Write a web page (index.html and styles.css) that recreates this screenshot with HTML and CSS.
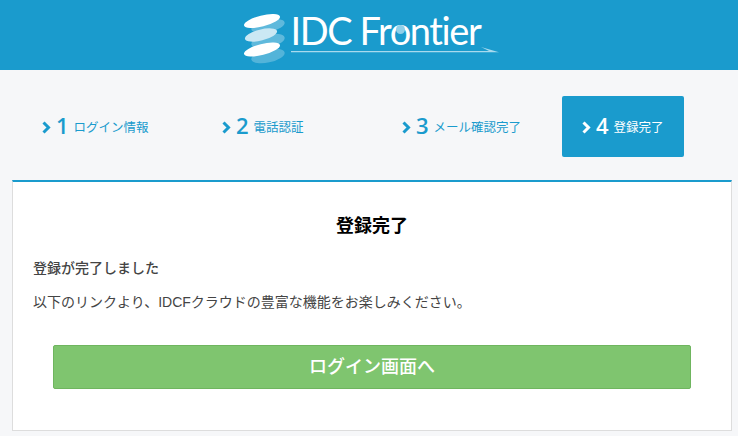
FILE: index.html
```html
<!DOCTYPE html>
<html lang="ja">
<head>
<meta charset="utf-8">
<title>登録完了</title>
<link rel="stylesheet" href="styles.css">
</head>
<body>
<header class="site-header">
  <div class="logo">
    <svg class="logo-mark" width="42" height="54" viewBox="0 0 42 54">
      <ellipse cx="24" cy="14" rx="17" ry="6" fill="#fff" fill-opacity=".3" transform="rotate(-12 24 14)"/>
      <ellipse cx="24" cy="29" rx="17" ry="6.5" fill="#fff" fill-opacity=".3" transform="rotate(-12 24 29)"/>
      <ellipse cx="24" cy="44" rx="17" ry="6.5" fill="#fff" fill-opacity=".25" transform="rotate(-12 24 44)"/>
      <ellipse cx="18" cy="9" rx="18.5" ry="5.5" fill="#fff" transform="rotate(-14 18 9)"/>
      <ellipse cx="17" cy="23" rx="16.5" ry="5.5" fill="#cbe8f4" transform="rotate(-14 17 23)"/>
      <ellipse cx="18" cy="37.5" rx="18.5" ry="5.5" fill="#fff" transform="rotate(-14 18 37.5)"/>
    </svg>
    <div class="logo-word">
      <span class="logo-text">IDC Fr<span class="logo-o">o</span>ntier</span>
      <svg class="logo-line" width="208" height="8" viewBox="0 0 208 8">
        <path d="M0 5.2H208L190 0L198 4H0Z" fill="#a8daee"/>
      </svg>
    </div>
  </div>
</header>
<main class="page">
  <ol class="steps">
    <li class="step"><span class="step-link"><svg class="chev" width="9" height="13" viewBox="0 0 9 13"><path d="M1.5 1.5L6.5 6.5L1.5 11.5" fill="none" stroke="currentColor" stroke-width="3"/></svg><b class="num">1</b><span class="label">ログイン情報</span></span></li>
    <li class="step"><span class="step-link"><svg class="chev" width="9" height="13" viewBox="0 0 9 13"><path d="M1.5 1.5L6.5 6.5L1.5 11.5" fill="none" stroke="currentColor" stroke-width="3"/></svg><b class="num">2</b><span class="label">電話認証</span></span></li>
    <li class="step"><span class="step-link"><svg class="chev" width="9" height="13" viewBox="0 0 9 13"><path d="M1.5 1.5L6.5 6.5L1.5 11.5" fill="none" stroke="currentColor" stroke-width="3"/></svg><b class="num">3</b><span class="label">メール確認完了</span></span></li>
    <li class="step"><span class="step-link active"><svg class="chev" width="9" height="13" viewBox="0 0 9 13"><path d="M1.5 1.5L6.5 6.5L1.5 11.5" fill="none" stroke="currentColor" stroke-width="3"/></svg><b class="num">4</b><span class="label">登録完了</span></span></li>
  </ol>
  <section class="card">
    <h1 class="title">登録完了</h1>
    <p class="lead">登録が完了しました</p>
    <p class="text">以下のリンクより、IDCFクラウドの豊富な機能をお楽しみください。</p>
    <a class="btn" href="#">ログイン画面へ</a>
  </section>
</main>
</body>
</html>
```
FILE: styles.css
```css
* { box-sizing: border-box; }
html, body { margin: 0; padding: 0; }
body {
  background: #f6f7f9;
  color: #333;
  font-family: "Liberation Sans", "Noto Sans CJK JP", sans-serif;
  font-size: 14px;
}
.site-header {
  height: 70px;
  background: #1a9bcd;
  display: flex;
  justify-content: center;
}
.logo {
  display: flex;
  align-items: flex-start;
  gap: 5px;
  padding-top: 12px;
  margin-left: 4px;
}
.logo-mark { display: block; }
.logo-word {
  display: flex;
  flex-direction: column;
  margin-top: 1px;
}
.logo-text {
  color: #fff;
  font-family: "Lato", sans-serif;
  font-weight: 400;
  font-size: 38px;
  line-height: 34px;
  letter-spacing: -1.4px;
  white-space: nowrap;
}
.logo-o { position: relative; }
.logo-o::after {
  content: "";
  position: absolute;
  left: 6px;
  top: 18px;
  width: 9px;
  height: 9px;
  border-radius: 50%;
  background: #8fd0ea;
}
.logo-line { display: block; margin-top: 0; }
.page { padding: 26px 6px 0 12px; }
.steps {
  list-style: none;
  margin: 0;
  padding: 0;
  display: grid;
  grid-template-columns: repeat(4, 180px);
  height: 84px;
}
.step { padding-left: 10px; }
.step-link {
  display: inline-flex;
  align-items: center;
  height: 61px;
  padding: 0 20px;
  color: #1a9bcd;
  border-radius: 2px;
  white-space: nowrap;
}
.step-link.active {
  background: #1a9bcd;
  color: #fff;
}
.chev { flex: none; margin-right: 5px; margin-top: 1px; }
.num {
  font-family: "Open Sans", sans-serif;
  font-size: 22px;
  font-weight: 600;
  line-height: 1;
  margin-right: 5px;
  margin-top: -3px;
}
.label { font-size: 12.5px; line-height: 1; margin-top: 4px; }
.card {
  height: 251px;
  background: #fff;
  border: 1px solid #ddd;
  border-top: 2px solid #1a9bcd;
  padding: 32px 20px 0;
}
.title {
  margin: 0;
  text-align: center;
  color: #000;
  font-size: 18px;
  font-weight: 700;
  line-height: 24px;
}
.lead {
  margin: 21px 0 0;
  font-size: 14px;
  font-weight: 500;
  color: #444;
  line-height: 18px;
}
.text {
  margin: 16px 0 0;
  color: #444;
  font-size: 14px;
  line-height: 18px;
}
.btn {
  display: block;
  height: 44px;
  margin: 34px 20px 0;
  background: #7fc56f;
  border: 1px solid #6fb55f;
  border-radius: 2px;
  color: #fff;
  font-size: 18px;
  font-weight: 500;
  line-height: 42px;
  text-align: center;
  text-decoration: none;
}
```
